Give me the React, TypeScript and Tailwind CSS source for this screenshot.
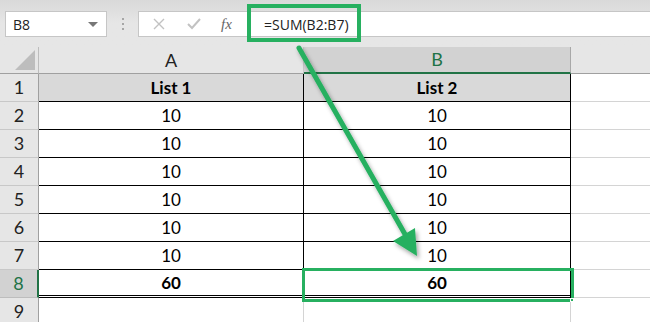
import React from 'react';

const rows = [
  { n: 1, a: 'List 1', b: 'List 2', head: true },
  { n: 2, a: '10', b: '10' },
  { n: 3, a: '10', b: '10' },
  { n: 4, a: '10', b: '10' },
  { n: 5, a: '10', b: '10' },
  { n: 6, a: '10', b: '10' },
  { n: 7, a: '10', b: '10' },
  { n: 8, a: '60', b: '60', total: true },
];

const Dots = () => (
  <div className="w-[31px] h-[26px] flex flex-col items-center justify-center gap-[3px]">
    <span className="w-[2px] h-[2px] bg-[#a6a6a6]" />
    <span className="w-[2px] h-[2px] bg-[#a6a6a6]" />
    <span className="w-[2px] h-[2px] bg-[#a6a6a6]" />
  </div>
);

export default function App() {
  return (
    <div className="relative w-[650px] h-[322px] overflow-hidden bg-[#e6e6e6] font-['Lato','Open_Sans',sans-serif] text-black">
      {/* formula bar */}
      <div className="h-[47px] flex items-start pt-[11px] pl-[5px] bg-gradient-to-b from-[#d9d9d9] via-[#e6e6e6] to-[#e6e6e6]">
        <div className="w-[102px] h-[26px] bg-white border border-[#c6c6c6] flex items-center justify-between pl-[7px] pr-[8px] font-['Open_Sans',sans-serif] text-[14px] text-[#222]">
          <span>B8</span>
          <span className="w-0 h-0 border-l-[5px] border-r-[5px] border-t-[5px] border-l-transparent border-r-transparent border-t-[#777]" />
        </div>
        <Dots />
        <div className="flex-1 h-[26px] bg-white border border-[#c6c6c6] border-r-0 flex items-center">
          <div className="w-[110px] flex items-center">
            <svg width="12" height="12" viewBox="0 0 12 12" className="ml-[14px]">
              <path d="M1 1L11 11M11 1L1 11" stroke="#c2c2c2" strokeWidth="1.4" fill="none" />
            </svg>
            <svg width="14" height="12" viewBox="0 0 14 12" className="ml-[22px]">
              <path d="M1 6L5 10L13 1" stroke="#c2c2c2" strokeWidth="2" fill="none" />
            </svg>
            <span className="ml-[20px] font-['Liberation_Serif',serif] italic text-[15px] text-[#666]">fx</span>
          </div>
          <span className="pl-[15px] font-['Open_Sans',sans-serif] text-[14px] text-[#222]">=SUM(B2:B7)</span>
        </div>
      </div>

      {/* column headers */}
      <div className="flex h-[27px]">
        <div className="w-[39px] flex items-end justify-end pr-[3px] pb-[3px] border-r border-[#bdbdbd] border-b border-b-[#a0a0a0]">
          <svg width="20" height="20" viewBox="0 0 20 20">
            <polygon points="20,0 20,20 0,20" fill="#bdbdbd" />
          </svg>
        </div>
        <div className="w-[265px] flex items-center justify-center border-r border-[#c8c8c8] border-b border-b-[#a0a0a0] text-[18px] text-[#222]">A</div>
        <div className="w-[267px] flex items-center justify-center bg-[#d2d2d2] border-r border-[#a8a8a8] border-b-2 border-b-[#217346] text-[18px] text-[#217346]">B</div>
        <div className="flex-1 border-b border-[#a0a0a0]" />
      </div>

      {/* rows */}
      {rows.map((r) => (
        <div key={r.n} className="flex h-[28px]">
          <div
            className={`w-[39px] flex items-center justify-center text-[18px] ${
              r.total
                ? 'bg-[#d2d2d2] text-[#217346] border-r-2 border-r-[#217346] border-b border-b-[#bdbdbd]'
                : 'bg-[#e6e6e6] text-[#222] border-r border-r-[#a0a0a0] border-b border-b-[#c8c8c8]'
            }`}
          >
            {r.n}
          </div>
          <div
            className={`w-[265px] flex items-center justify-center text-[17px] border-r border-black ${
              r.head ? 'bg-[#d9d9d9] font-bold' : 'bg-white'
            } ${r.total ? 'font-bold border-b-[3px] border-double' : 'border-b'}`}
          >
            {r.a}
          </div>
          <div
            className={`w-[267px] flex items-center justify-center text-[17px] border-r border-black ${
              r.head ? 'bg-[#d9d9d9] font-bold' : 'bg-white'
            } ${r.total ? 'font-bold border-b-[3px] border-double' : 'border-b'}`}
          >
            {r.b}
          </div>
          <div className="flex-1 bg-white border-b border-[#d4d4d4]" />
        </div>
      ))}
      <div className="flex h-[30px]">
        <div className="w-[39px] flex items-start pt-[2px] justify-center text-[18px] leading-[22px] text-[#222] border-r border-[#a0a0a0]">9</div>
        <div className="w-[265px] bg-white border-r border-[#d4d4d4]" />
        <div className="w-[267px] bg-white border-r border-[#d4d4d4]" />
        <div className="flex-1 bg-white" />
      </div>

      {/* annotation: formula box */}
      <div className="absolute left-[247px] top-[4px] w-[114px] h-[38px] border-[4px] border-[#27b060]" />

      {/* annotation: selected cell */}
      <div className="absolute left-[302px] top-[268px] w-[272px] h-[34px] border-[3px] border-[#27b060]">
        <span className="absolute -right-[3px] -bottom-[3px] w-[4px] h-[4px] bg-[#27b060] border border-white" />
      </div>

      {/* annotation: arrow */}
      <svg className="absolute left-0 top-0 pointer-events-none" width="650" height="322" viewBox="0 0 650 322">
        <defs>
          <filter id="sh" x="-20%" y="-20%" width="140%" height="140%">
            <feDropShadow dx="2" dy="3" stdDeviation="2" floodColor="#000" floodOpacity="0.35" />
          </filter>
        </defs>
        <g filter="url(#sh)">
          <line x1="299" y1="48" x2="406" y2="236" stroke="#27b060" strokeWidth="5" strokeLinecap="round" />
          <polygon points="417,256 393,241 415,228" fill="#27b060" />
        </g>
      </svg>
    </div>
  );
}
